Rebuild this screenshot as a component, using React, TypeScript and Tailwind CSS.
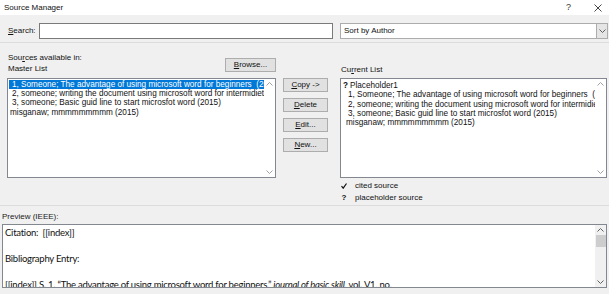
import React from "react";

const U = ({ children }: { children: React.ReactNode }) => <span className="underline underline-offset-1">{children}</span>;

const ChevUp = ({ c = "#a0a0a0" }: { c?: string }) => (
  <svg width="7" height="4" viewBox="0 0 7 4"><path d="M0.5 3.5 L3.5 0.5 L6.5 3.5" fill="none" stroke={c} strokeWidth="1" /></svg>
);
const ChevDown = ({ c = "#a0a0a0" }: { c?: string }) => (
  <svg width="7" height="4" viewBox="0 0 7 4"><path d="M0.5 0.5 L3.5 3.5 L6.5 0.5" fill="none" stroke={c} strokeWidth="1" /></svg>
);

const Btn = ({ children, w = "w-[45px]" }: { children: React.ReactNode; w?: string }) => (
  <div className={`${w} h-[14px] bg-[#e1e1e1] border border-[#adadad] flex items-center justify-center text-[8px] leading-none text-[#111]`}>
    {children}
  </div>
);

export default function App() {
  return (
    <div
      className="w-[609px] h-[294px] bg-[#f0f0f0] overflow-hidden flex flex-col text-[8px] leading-none text-[#111]"
      style={{ fontFamily: '"Liberation Sans", Arial, sans-serif' }}
    >
      {/* title bar */}
      <div className="h-[15px] bg-white flex items-center pl-[4px] shrink-0">
        <div className="flex-1 text-[8px]">Source Manager</div>
        <div className="w-[6px] text-[9px] text-[#333] mr-[22px]">?</div>
        <svg width="8" height="8" viewBox="0 0 8 8" className="mr-[7px]">
          <path d="M0.5 0.5 L7.5 7.5 M7.5 0.5 L0.5 7.5" stroke="#333" strokeWidth="0.9" />
        </svg>
      </div>

      {/* search row */}
      <div className="flex items-center mt-[8px] h-[16px] shrink-0">
        <div className="w-[39px] pl-[8px]"><U>S</U>earch:</div>
        <div className="w-[294px] h-[16px] bg-white border border-[#7a7a7a]" />
        <div className="ml-[7px] w-[268px] h-[16px] bg-white border border-[#acacac] flex items-center">
          <div className="flex-1 pl-[3px]">Sort by Author</div>
          <div className="w-[11px] h-[14px] bg-[#e5e5e5] border-l border-[#acacac] flex items-center justify-center">
            <ChevDown c="#606060" />
          </div>
        </div>
      </div>

      <div className="mt-[3px] h-[1px] bg-[#dcdcdc] shrink-0" />

      {/* main */}
      <div className="flex h-[162px] shrink-0">
        {/* left */}
        <div className="ml-[7px] w-[269px] flex flex-col">
          <div className="flex items-start h-[35px]">
            <div className="flex-1 pt-[9px] pl-[1px] leading-[11px]">
              <div>Sou<U>r</U>ces available in:</div>
              <div>Master List</div>
            </div>
            <div className="mt-[15px]">
              <Btn w="w-[51px]"><U>B</U>rowse...</Btn>
            </div>
          </div>
          <div className="h-[100px] bg-white border border-[#828790] flex">
            <div className="flex-1 min-w-0 pt-[1px] pl-[1px] text-[8.2px] leading-[9.3px] whitespace-nowrap overflow-hidden">
              <div className="h-[9px] leading-[9px] bg-[#0078d7] text-white pl-[3px] overflow-hidden">1, Someone; The advantage of using microsoft word for beginners&nbsp;&nbsp;(2015)</div>
              <div className="pl-[3px]">2, someone; writing the document using microsoft word for intermidiet user (2015)</div>
              <div className="pl-[3px]">3, someone; Basic guid line to start microsfot word (2015)</div>
              <div className="pl-[1px]">misganaw; mmmmmmmmm (2015)</div>
            </div>
            <div className="w-[11px] flex flex-col items-center justify-between py-[3px]">
              <ChevUp />
              <ChevDown />
            </div>
          </div>
        </div>

        {/* middle buttons */}
        <div className="ml-[7px] w-[45px] pt-[35px] flex flex-col gap-[6px]">
          <Btn><U>C</U>opy -&gt;</Btn>
          <Btn><U>D</U>elete</Btn>
          <Btn><U>E</U>dit...</Btn>
          <Btn><U>N</U>ew...</Btn>
        </div>

        {/* right */}
        <div className="ml-[12px] w-[267px] flex flex-col">
          <div className="h-[35px] pt-[23px] pl-[1px]">Cu<U>r</U>rent List</div>
          <div className="h-[100px] bg-white border border-[#828790] flex">
            <div className="flex-1 min-w-0 pt-[2px] pl-[2px] text-[8.2px] leading-[9.3px] whitespace-nowrap overflow-hidden">
              <div><span className="font-bold mr-[2px]">?</span>Placeholder1</div>
              <div className="pl-[5px]">1, Someone; The advantage of using microsoft word for beginners&nbsp;&nbsp;(2015)</div>
              <div className="pl-[5px]">2, someone; writing the document using microsoft word for intermidiet user (2015)</div>
              <div className="pl-[5px]">3, someone; Basic guid line to start microsfot word (2015)</div>
              <div className="pl-[3px]">misganaw; mmmmmmmmm (2015)</div>
            </div>
            <div className="w-[11px] flex flex-col items-center justify-between py-[3px]">
              <ChevUp />
              <ChevDown />
            </div>
          </div>
          <div className="mt-[4px] pl-[1px] flex flex-col gap-[4px]">
            <div className="flex items-center">
              <svg width="6" height="6" viewBox="0 0 6 6">
                <path d="M0.5 3.2 L2.2 5.2 L5.5 0.5" fill="none" stroke="#111" strokeWidth="1.2" />
              </svg>
              <span className="ml-[8px]">cited source</span>
            </div>
            <div className="flex items-center">
              <span className="w-[6px] font-bold text-center">?</span>
              <span className="ml-[8px]">placeholder source</span>
            </div>
          </div>
        </div>
      </div>

      <div className="h-[1px] bg-[#dcdcdc] shrink-0" />

      {/* preview */}
      <div className="pl-[2px] pt-[7px] h-[11px] shrink-0 text-[#222]">Preview (IEEE):</div>
      <div className="mx-[2px] mt-[7px] h-[64px] bg-white border border-[#828790] flex shrink-0 overflow-hidden">
        <div
          className="flex-1 min-w-0 pl-[2px] pt-[1px] text-[9.5px] tracking-[-0.25px] leading-[13px] whitespace-nowrap overflow-hidden text-[#111]"
          style={{ fontFamily: 'Lato, "Open Sans", sans-serif' }}
        >
          <div>Citation:&nbsp;&nbsp;[[index]]</div>
          <div>&nbsp;</div>
          <div>Bibliography Entry:</div>
          <div>&nbsp;</div>
          <div>[[index]] S. 1. “The advantage of using microsoft word for beginners,” <i>journal of basic skill,</i> vol. V1, no.</div>
        </div>
        <div className="w-[11px] bg-[#f0f0f0] flex flex-col items-center">
          <div className="h-[10px] flex items-center"><ChevUp c="#606060" /></div>
          <div className="w-[10px] h-[12px] bg-[#cdcdcd]" />
          <div className="flex-1" />
          <div className="h-[10px] flex items-center"><ChevDown c="#606060" /></div>
        </div>
      </div>
    </div>
  );
}
